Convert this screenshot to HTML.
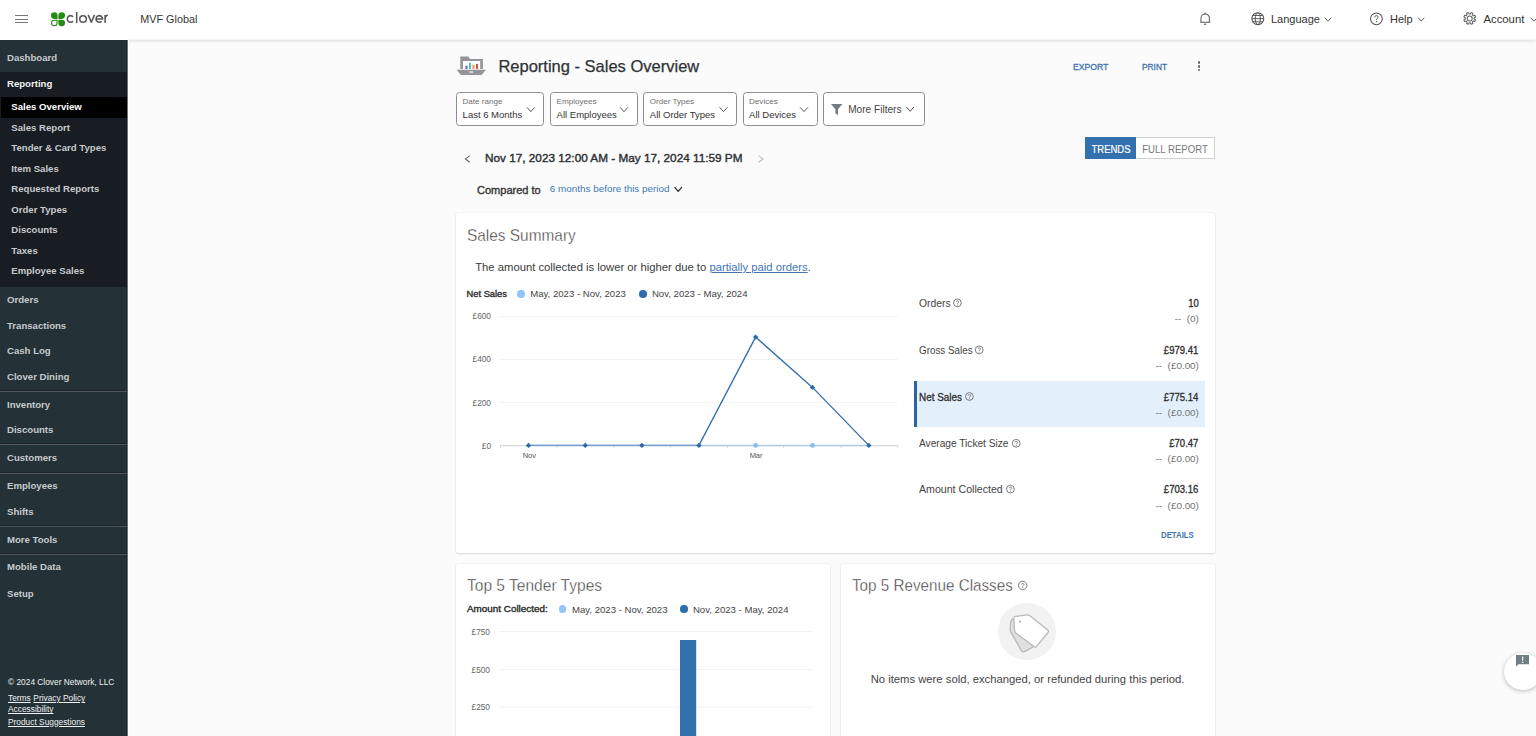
<!DOCTYPE html>
<html><head><meta charset="utf-8">
<style>
*{box-sizing:border-box;margin:0;padding:0}
html,body{width:1536px;height:736px;overflow:hidden;background:#fbfbfb;font-family:"Liberation Sans",sans-serif;color:#333}
.t{position:absolute;white-space:nowrap;line-height:20px}
.b{position:absolute}
svg{position:absolute;overflow:visible}
</style></head><body>

<div class="b" style="left:456px;top:213px;width:759px;height:340px;background:#fff;border-radius:2px;box-shadow:0 1px 2px rgba(0,0,0,.13),0 0 1.3px rgba(0,0,0,.15)"></div>
<div class="b" style="left:456px;top:564px;width:374px;height:200px;background:#fff;border-radius:2px;box-shadow:0 1px 2px rgba(0,0,0,.13),0 0 1.3px rgba(0,0,0,.15)"></div>
<div class="b" style="left:841px;top:564px;width:374px;height:200px;background:#fff;border-radius:2px;box-shadow:0 1px 2px rgba(0,0,0,.13),0 0 1.3px rgba(0,0,0,.15)"></div>
<div class="b" style="left:0px;top:0px;width:1536px;height:40px;background:#fff;box-shadow:0 1px 3px rgba(0,0,0,.13)"></div>
<div class="b" style="left:129px;top:39px;width:1407px;height:1px;background:rgba(0,0,0,.03)"></div>
<div class="b" style="left:15.2px;top:15.2px;width:12.5px;height:1px;background:#777"></div>
<div class="b" style="left:15.2px;top:18.7px;width:12.5px;height:1px;background:#777"></div>
<div class="b" style="left:15.2px;top:22.1px;width:12.5px;height:1px;background:#777"></div>
<svg style="left:0;top:0" width="1" height="1">
<path fill="#238a12" d="M57.6 18.9H54.3A3.3 3.3 0 1 1 57.6 15.6Z"/>
<path fill="#238a12" d="M58.4 18.9V15.6A3.3 3.3 0 1 1 61.7 18.9Z"/>
<path fill="#238a12" d="M58.4 19.7H61.7A3.3 3.3 0 1 1 58.4 23Z"/>
<path fill="none" stroke="#238a12" stroke-width="1.1" d="M57.05 20.25V23A2.75 2.75 0 1 1 54.3 20.25Z"/>
<g fill="none" stroke="#575757" stroke-width="1.55">
<path d="M73.05 16.74A3.3 3.3 0 1 0 73.05 21.16"/>
<path d="M76.7 12V23.1"/>
<circle cx="83.05" cy="18.95" r="3.3"/>
<path d="M88.2 14.9L91.35 22.2L94.5 14.9" stroke-linejoin="round"/>
<path d="M95.95 18.95H102.60A3.3 3.3 0 1 0 101.63 21.28"/>
<path d="M105.1 14.9V23.1M105.1 18.6C105.1 16.2 106.2 15.3 107.8 15.3"/>
</g>
</svg>
<div class="t" style="left:140.30px;top:9.06px;font-size:10.8px;font-weight:normal;color:#333;">MVF Global</div>
<svg style="left:0;top:0" width="1" height="1">
<path d="M1201 22.2V18.2A4.2 4.2 0 0 1 1209.4 18.2V22.2" fill="none" stroke="#666" stroke-width="1.1"/>
<path d="M1200.2 22.3H1210.2" stroke="#666" stroke-width="1.15"/>
<circle cx="1205.2" cy="13.4" r="0.9" fill="#777"/>
<ellipse cx="1205.1" cy="24.3" rx="1.3" ry="0.75" fill="#666"/>
</svg>
<svg style="left:0;top:0" width="1" height="1">
<circle cx="1257.8" cy="18.65" r="5.95" fill="none" stroke="#555" stroke-width="1.1"/>
<ellipse cx="1257.8" cy="18.65" rx="2.55" ry="5.95" fill="none" stroke="#555" stroke-width="1.0"/>
<path d="M1252.6 15.5H1263M1251.9 18.65H1263.7M1252.6 21.8H1263" stroke="#555" stroke-width="0.95"/>
</svg>
<div class="t" style="left:1271.00px;top:8.89px;font-size:11px;font-weight:normal;color:#333;">Language</div>
<svg style="left:0;top:0" width="1" height="1"><path d="M1325 18L1328.0 21.2L1331 18" fill="none" stroke="#666" stroke-width="1.0" stroke-linecap="round" stroke-linejoin="round"/></svg>
<svg style="left:1370px;top:12px" width="14" height="14" viewBox="0 0 14 14">
<circle cx="6.4" cy="6.8" r="5.9" fill="none" stroke="#555" stroke-width="1.05"/>
<path d="M4.7 5.3C4.7 4.2 5.5 3.6 6.4 3.6C7.4 3.6 8.1 4.2 8.1 5.1C8.1 6.2 6.5 6.3 6.5 7.8" fill="none" stroke="#555" stroke-width="1"/>
<circle cx="6.5" cy="9.6" r="0.65" fill="#555"/>
</svg>
<div class="t" style="left:1390.00px;top:9.09px;font-size:11px;font-weight:normal;color:#333;">Help</div>
<svg style="left:0;top:0" width="1" height="1"><path d="M1418.5 18L1421.25 21.2L1424 18" fill="none" stroke="#666" stroke-width="1.0" stroke-linecap="round" stroke-linejoin="round"/></svg>
<svg style="left:0;top:0" width="1" height="1">
<path d="M1470.27 14.04L1471.10 12.57L1472.83 13.28L1472.38 14.91L1473.19 15.72L1474.82 15.27L1475.53 17.00L1474.06 17.83L1474.06 18.97L1475.53 19.80L1474.82 21.53L1473.19 21.08L1472.38 21.89L1472.83 23.52L1471.10 24.23L1470.27 22.76L1469.13 22.76L1468.30 24.23L1466.57 23.52L1467.02 21.89L1466.21 21.08L1464.58 21.53L1463.87 19.80L1465.34 18.97L1465.34 17.83L1463.87 17.00L1464.58 15.27L1466.21 15.72L1467.02 14.91L1466.57 13.28L1468.30 12.57L1469.13 14.04Z" fill="none" stroke="#666" stroke-width="1.05" stroke-linejoin="round"/>
<circle cx="1469.7" cy="18.4" r="2.5" fill="none" stroke="#666" stroke-width="1.05"/>
</svg>
<div class="t" style="left:1483.50px;top:8.98px;font-size:11.3px;font-weight:normal;color:#333;">Account</div>
<svg style="left:0;top:0" width="1" height="1"><path d="M1531 18L1534.0 21.2L1537 18" fill="none" stroke="#666" stroke-width="1.0" stroke-linecap="round" stroke-linejoin="round"/></svg>
<div class="b" style="left:0px;top:40px;width:127px;height:696px;background:#243136"></div>
<div class="b" style="left:126px;top:40px;width:1px;height:696px;background:rgba(0,0,0,.18)"></div>
<div class="b" style="left:127px;top:40px;width:1px;height:696px;background:#6b7276"></div>
<div class="b" style="left:128px;top:40px;width:1px;height:696px;background:#fff"></div>
<div class="b" style="left:0px;top:71.5px;width:127px;height:215.5px;background:#181c23"></div>
<div class="b" style="left:1px;top:97px;width:126px;height:21px;background:#000"></div>
<div class="t" style="left:7.00px;top:47.77px;font-size:9.6px;font-weight:bold;color:#c6cacd;">Dashboard</div>
<div class="t" style="left:7.00px;top:73.67px;font-size:9.6px;font-weight:bold;color:#f2f2f2;">Reporting</div>
<div class="t" style="left:11.30px;top:97.37px;font-size:9.6px;font-weight:bold;color:#fff;">Sales Overview</div>
<div class="t" style="left:11.30px;top:117.57px;font-size:9.6px;font-weight:bold;color:#c6cacd;">Sales Report</div>
<div class="t" style="left:11.30px;top:138.27px;font-size:9.6px;font-weight:bold;color:#c6cacd;">Tender &amp; Card Types</div>
<div class="t" style="left:11.30px;top:158.87px;font-size:9.6px;font-weight:bold;color:#c6cacd;">Item Sales</div>
<div class="t" style="left:11.30px;top:179.37px;font-size:9.6px;font-weight:bold;color:#c6cacd;">Requested Reports</div>
<div class="t" style="left:11.30px;top:199.77px;font-size:9.6px;font-weight:bold;color:#c6cacd;">Order Types</div>
<div class="t" style="left:11.30px;top:220.07px;font-size:9.6px;font-weight:bold;color:#c6cacd;">Discounts</div>
<div class="t" style="left:11.30px;top:240.67px;font-size:9.6px;font-weight:bold;color:#c6cacd;">Taxes</div>
<div class="t" style="left:11.30px;top:261.37px;font-size:9.6px;font-weight:bold;color:#c6cacd;">Employee Sales</div>
<div class="t" style="left:7.00px;top:289.77px;font-size:9.6px;font-weight:bold;color:#c6cacd;">Orders</div>
<div class="t" style="left:7.00px;top:315.77px;font-size:9.6px;font-weight:bold;color:#c6cacd;">Transactions</div>
<div class="t" style="left:7.00px;top:341.27px;font-size:9.6px;font-weight:bold;color:#c6cacd;">Cash Log</div>
<div class="t" style="left:7.00px;top:367.17px;font-size:9.6px;font-weight:bold;color:#c6cacd;">Clover Dining</div>
<div class="t" style="left:7.00px;top:394.57px;font-size:9.6px;font-weight:bold;color:#c6cacd;">Inventory</div>
<div class="t" style="left:7.00px;top:420.37px;font-size:9.6px;font-weight:bold;color:#c6cacd;">Discounts</div>
<div class="t" style="left:7.00px;top:448.17px;font-size:9.6px;font-weight:bold;color:#c6cacd;">Customers</div>
<div class="t" style="left:7.00px;top:476.37px;font-size:9.6px;font-weight:bold;color:#c6cacd;">Employees</div>
<div class="t" style="left:7.00px;top:501.57px;font-size:9.6px;font-weight:bold;color:#c6cacd;">Shifts</div>
<div class="t" style="left:7.00px;top:530.27px;font-size:9.6px;font-weight:bold;color:#c6cacd;">More Tools</div>
<div class="t" style="left:7.00px;top:557.47px;font-size:9.6px;font-weight:bold;color:#c6cacd;">Mobile Data</div>
<div class="t" style="left:7.00px;top:584.07px;font-size:9.6px;font-weight:bold;color:#c6cacd;">Setup</div>
<div class="b" style="left:0px;top:390px;width:127px;height:1px;background:#1d242a"></div>
<div class="b" style="left:0px;top:391px;width:127px;height:1px;background:#4d575d"></div>
<div class="b" style="left:0px;top:443px;width:127px;height:1px;background:#1d242a"></div>
<div class="b" style="left:0px;top:444px;width:127px;height:1px;background:#4d575d"></div>
<div class="b" style="left:0px;top:472px;width:127px;height:1px;background:#1d242a"></div>
<div class="b" style="left:0px;top:473px;width:127px;height:1px;background:#4d575d"></div>
<div class="b" style="left:0px;top:525px;width:127px;height:1px;background:#1d242a"></div>
<div class="b" style="left:0px;top:526px;width:127px;height:1px;background:#4d575d"></div>
<div class="b" style="left:0px;top:553px;width:127px;height:1px;background:#1d242a"></div>
<div class="b" style="left:0px;top:554px;width:127px;height:1px;background:#4d575d"></div>
<div class="t" style="left:8.00px;top:672.41px;font-size:8.35px;font-weight:normal;color:#eef0f1;">&copy; 2024 Clover Network, LLC</div>
<div class="t" style="left:8.00px;top:688.11px;font-size:8.35px;font-weight:normal;color:#eef0f1;"><u>Terms</u><span style="display:inline-block;width:2.6px"></span><u>Privacy Policy</u></div>
<div class="t" style="left:8.00px;top:699.41px;font-size:8.35px;font-weight:normal;color:#eef0f1;"><u>Accessibility</u></div>
<div class="t" style="left:8.00px;top:711.61px;font-size:8.35px;font-weight:normal;color:#eef0f1;"><u>Product Suggestions</u></div>
<svg style="left:456px;top:55px" width="31" height="21" viewBox="0 0 31 21">
<path d="M4.3 1.4H12.6L13.8 4.1H26.9V14H4.3Z" fill="#939598"/>
<rect x="7" y="6" width="17.2" height="8.5" fill="#fff"/>
<rect x="9.4" y="10.7" width="2.1" height="3.3" fill="#6b6bc9"/>
<rect x="13" y="7.8" width="1.9" height="6.2" fill="#3cc4c4"/>
<rect x="16.4" y="9.7" width="2.1" height="4.3" fill="#f59f45"/>
<rect x="20" y="8.9" width="2.1" height="5.1" fill="#c85a5a"/>
<path d="M0.5 14.7H30.1L25.5 19.9H4.9Z" fill="#939598"/>
<rect x="13.3" y="16.3" width="3.8" height="1.5" fill="#e8e8e8"/>
</svg>
<div class="t" style="left:498.40px;top:55.68px;font-size:16.5px;font-weight:normal;color:#2f3336;-webkit-text-stroke:0.25px #2f3336">Reporting - Sales Overview</div>
<div class="t" style="left:1073.00px;top:56.57px;font-size:9.6px;font-weight:normal;color:#3a72b0;-webkit-text-stroke:0.3px #3a72b0;transform:scaleX(0.9);transform-origin:left center">EXPORT</div>
<div class="t" style="left:1141.80px;top:56.57px;font-size:9.6px;font-weight:normal;color:#3a72b0;-webkit-text-stroke:0.3px #3a72b0;transform:scaleX(0.87);transform-origin:left center">PRINT</div>
<div class="b" style="left:1198.2px;top:61.4px;width:2.3px;height:2.3px;border-radius:50%;background:#666"></div>
<div class="b" style="left:1198.2px;top:65.3px;width:2.3px;height:2.3px;border-radius:50%;background:#666"></div>
<div class="b" style="left:1198.2px;top:69.2px;width:2.3px;height:2.3px;border-radius:50%;background:#666"></div>
<div class="b" style="left:456px;top:92px;width:88px;height:34px;background:#fff;border:1px solid #8e8e8e;border-radius:3.5px"></div>
<div class="t" style="left:462.50px;top:91.79px;font-size:8.1px;font-weight:normal;color:#6f6f6f;">Date range</div>
<div class="t" style="left:462.60px;top:104.91px;font-size:9.5px;font-weight:normal;color:#333;">Last 6 Months</div>
<svg style="left:0;top:0" width="1" height="1"><path d="M527.0999999999999 107.6L530.8 111.6L534.5 107.6" fill="none" stroke="#555" stroke-width="1.0" stroke-linecap="round" stroke-linejoin="round"/></svg>
<div class="b" style="left:550px;top:92px;width:87.5px;height:34px;background:#fff;border:1px solid #8e8e8e;border-radius:3.5px"></div>
<div class="t" style="left:556.50px;top:91.79px;font-size:8.1px;font-weight:normal;color:#6f6f6f;">Employees</div>
<div class="t" style="left:556.60px;top:104.91px;font-size:9.5px;font-weight:normal;color:#333;">All Employees</div>
<svg style="left:0;top:0" width="1" height="1"><path d="M620.3 107.6L624.0 111.6L627.7 107.6" fill="none" stroke="#555" stroke-width="1.0" stroke-linecap="round" stroke-linejoin="round"/></svg>
<div class="b" style="left:643.2px;top:92px;width:94.09999999999991px;height:34px;background:#fff;border:1px solid #8e8e8e;border-radius:3.5px"></div>
<div class="t" style="left:649.70px;top:91.79px;font-size:8.1px;font-weight:normal;color:#6f6f6f;">Order Types</div>
<div class="t" style="left:649.80px;top:104.91px;font-size:9.5px;font-weight:normal;color:#333;">All Order Types</div>
<svg style="left:0;top:0" width="1" height="1"><path d="M719.8 107.6L723.5 111.6L727.2 107.6" fill="none" stroke="#555" stroke-width="1.0" stroke-linecap="round" stroke-linejoin="round"/></svg>
<div class="b" style="left:742.5px;top:92px;width:75.10000000000002px;height:34px;background:#fff;border:1px solid #8e8e8e;border-radius:3.5px"></div>
<div class="t" style="left:749.00px;top:91.79px;font-size:8.1px;font-weight:normal;color:#6f6f6f;">Devices</div>
<div class="t" style="left:749.10px;top:104.91px;font-size:9.5px;font-weight:normal;color:#333;">All Devices</div>
<svg style="left:0;top:0" width="1" height="1"><path d="M800.3 107.6L804.0 111.6L807.7 107.6" fill="none" stroke="#555" stroke-width="1.0" stroke-linecap="round" stroke-linejoin="round"/></svg>
<div class="b" style="left:823px;top:92px;width:101.5px;height:34px;background:#fff;border:1px solid #8e8e8e;border-radius:3.5px"></div>
<svg style="left:830.8px;top:104px" width="12" height="11" viewBox="0 0 12 11"><path d="M0 0H11.4L7 5.2V11L4.4 9.3V5.2Z" fill="#737b80"/></svg>
<div class="t" style="left:848.20px;top:100.10px;font-size:10.1px;font-weight:normal;color:#444;">More Filters</div>
<svg style="left:0;top:0" width="1" height="1"><path d="M906.5 107.2L910.15 111.3L913.8 107.2" fill="none" stroke="#555" stroke-width="1.0" stroke-linecap="round" stroke-linejoin="round"/></svg>
<svg style="left:0;top:0" width="1" height="1"><path d="M469.8 155.6L465.4 158.9L469.8 162.2" fill="none" stroke="#666" stroke-width="1.1"/></svg>
<div class="t" style="left:485.20px;top:148.38px;font-size:11.6px;font-weight:normal;color:#2c2f33;-webkit-text-stroke:0.4px #2c2f33;transform:scaleX(1.015);transform-origin:left center">Nov 17, 2023 12:00 AM - May 17, 2024 11:59 PM</div>
<svg style="left:0;top:0" width="1" height="1"><path d="M758.6 155.6L763 158.9L758.6 162.2" fill="none" stroke="#bbb" stroke-width="1.1"/></svg>
<div class="t" style="left:477.40px;top:179.62px;font-size:10.6px;font-weight:normal;color:#333;-webkit-text-stroke:0.35px #333;transform:scaleX(1.04);transform-origin:left center">Compared to</div>
<div class="t" style="left:549.80px;top:179.17px;font-size:9.9px;font-weight:normal;color:#3f78b5;">6 months before this period</div>
<svg style="left:0;top:0" width="1" height="1"><path d="M674.8 187.4L678.2 191.4L681.6 187.4" fill="none" stroke="#333" stroke-width="1.3" stroke-linecap="round" stroke-linejoin="round"/></svg>
<div class="b" style="left:1085px;top:137px;width:51px;height:22px;background:#3271ad"></div>
<div class="b" style="left:1136px;top:137px;width:79px;height:22px;background:#fff;border:1px solid #cfcfcf;border-left:none"></div>
<div class="t" style="left:810.60px;width:600px;text-align:center;top:139.26px;font-size:10.8px;font-weight:normal;color:#fff;-webkit-text-stroke:0.2px #fff;transform:scaleX(0.88);transform-origin:center center">TRENDS</div>
<div class="t" style="left:875.40px;width:600px;text-align:center;top:139.26px;font-size:10.8px;font-weight:normal;color:#777;;transform:scaleX(0.89);transform-origin:center center">FULL REPORT</div>
<div class="t" style="left:466.60px;top:224.91px;font-size:16.4px;font-weight:normal;color:#333;-webkit-text-stroke:0.4px #fff;transform:scaleX(0.94);transform-origin:left center">Sales Summary</div>
<div class="t" style="left:475.20px;top:257.39px;font-size:11.28px;font-weight:normal;color:#3a3a3a;">The amount collected is lower or higher due to <span style="color:#4277b3;text-decoration:underline">partially paid orders</span>.</div>
<div class="t" style="left:466.60px;top:284.18px;font-size:9.3px;font-weight:normal;color:#2a2a2a;-webkit-text-stroke:0.35px #2a2a2a;transform:scaleX(1.0);transform-origin:left center">Net Sales</div>
<div class="b" style="left:517.3px;top:290px;width:7.6px;height:7.6px;border-radius:50%;background:#90c6f9"></div>
<div class="t" style="left:530.20px;top:284.07px;font-size:9.6px;font-weight:normal;color:#444;">May, 2023 - Nov, 2023</div>
<div class="b" style="left:639.2px;top:290px;width:7.6px;height:7.6px;border-radius:50%;background:#2f6cab"></div>
<div class="t" style="left:651.90px;top:284.07px;font-size:9.6px;font-weight:normal;color:#444;">Nov, 2023 - May, 2024</div>
<div class="t" style="right:1045.00px;top:306.42px;font-size:8.3px;font-weight:normal;color:#666;">£600</div>
<div class="t" style="right:1045.00px;top:349.42px;font-size:8.3px;font-weight:normal;color:#666;">£400</div>
<div class="t" style="right:1045.00px;top:392.52px;font-size:8.3px;font-weight:normal;color:#666;">£200</div>
<div class="t" style="right:1045.00px;top:435.62px;font-size:8.3px;font-weight:normal;color:#666;">£0</div>
<svg style="left:0;top:0" width="1" height="1"><path d="M500 316.5H898" stroke="#e9e9e9" stroke-width="1" stroke-dasharray="1 1"/><path d="M500 359.5H898" stroke="#e9e9e9" stroke-width="1" stroke-dasharray="1 1"/><path d="M500 402.5H898" stroke="#e9e9e9" stroke-width="1" stroke-dasharray="1 1"/><path d="M500 445.7H898" stroke="#d8d8d8" stroke-width="1.3"/><path d="M500.5 445.5V448.3" stroke="#d8d8d8" stroke-width="0.9"/><path d="M557 445.5V448.3" stroke="#d8d8d8" stroke-width="0.9"/><path d="M614 445.5V448.3" stroke="#d8d8d8" stroke-width="0.9"/><path d="M670.5 445.5V448.3" stroke="#d8d8d8" stroke-width="0.9"/><path d="M727.4 445.5V448.3" stroke="#d8d8d8" stroke-width="0.9"/><path d="M783.6 445.5V448.3" stroke="#d8d8d8" stroke-width="0.9"/><path d="M841.1 445.5V448.3" stroke="#d8d8d8" stroke-width="0.9"/><path d="M897.8 445.5V448.3" stroke="#d8d8d8" stroke-width="0.9"/><polyline points="528.5,445.4 585.2,445.4 641.9,445.4 698.9,445.4 755.6,337.1 812.5,387.4 868.8,445.4" fill="none" stroke="#3570ad" stroke-width="1.35" stroke-linejoin="round"/><path d="M528.5 445.4H868.8" stroke="#90c3ee" stroke-width="1.5" opacity="0.6"/><circle cx="755.6" cy="445.4" r="2.4" fill="#85bdee"/><circle cx="812.5" cy="445.4" r="2.4" fill="#85bdee"/><path d="M528.5 442.7L531.2 445.4L528.5 448.09999999999997L525.8 445.4Z" fill="#2f6aa8"/><path d="M585.2 442.7L587.9000000000001 445.4L585.2 448.09999999999997L582.5 445.4Z" fill="#2f6aa8"/><path d="M641.9 442.7L644.6 445.4L641.9 448.09999999999997L639.1999999999999 445.4Z" fill="#2f6aa8"/><path d="M698.9 442.7L701.6 445.4L698.9 448.09999999999997L696.1999999999999 445.4Z" fill="#2f6aa8"/><path d="M755.6 334.40000000000003L758.3000000000001 337.1L755.6 339.8L752.9 337.1Z" fill="#2f6aa8"/><path d="M812.5 384.7L815.2 387.4L812.5 390.09999999999997L809.8 387.4Z" fill="#2f6aa8"/><path d="M868.8 442.7L871.5 445.4L868.8 448.09999999999997L866.0999999999999 445.4Z" fill="#2f6aa8"/></svg>
<div class="t" style="left:229.30px;width:600px;text-align:center;top:445.70px;font-size:7.5px;font-weight:normal;color:#555;">Nov</div>
<div class="t" style="left:456.10px;width:600px;text-align:center;top:445.70px;font-size:7.5px;font-weight:normal;color:#555;">Mar</div>
<div class="b" style="left:914px;top:381px;width:290.5px;height:46px;background:#e3f0fc"></div>
<div class="b" style="left:914px;top:381px;width:2.5px;height:46px;background:#2b65a0"></div>
<div class="t" style="left:918.90px;top:293.02px;font-size:10.6px;font-weight:normal;color:#444;;transform:scaleX(0.977);transform-origin:left center">Orders</div>
<svg style="left:0;top:0" width="1" height="1"><circle cx="957.4" cy="302.9" r="3.9" fill="none" stroke="#666" stroke-width="0.85"/><path d="M956.1 301.9C956.1 300.7 958.8 300.7 958.8 302.0C958.8 302.9 957.4 302.79999999999995 957.4 304.0" fill="none" stroke="#666" stroke-width="0.8"/><circle cx="957.4" cy="305.09999999999997" r="0.5" fill="#666"/></svg>
<div class="t" style="right:337.30px;top:293.02px;font-size:10.6px;font-weight:normal;color:#2e2e2e;-webkit-text-stroke:0.32px #2e2e2e;transform:scaleX(0.9);transform-origin:right center">10</div>
<div class="t" style="right:337.10px;top:309.27px;font-size:9.9px;font-weight:normal;color:#737373;">--&nbsp; (0)</div>
<div class="t" style="left:918.90px;top:340.02px;font-size:10.6px;font-weight:normal;color:#444;;transform:scaleX(0.928);transform-origin:left center">Gross Sales</div>
<svg style="left:0;top:0" width="1" height="1"><circle cx="979.1999999999999" cy="349.9" r="3.9" fill="none" stroke="#666" stroke-width="0.85"/><path d="M977.9 348.9C977.9 347.7 980.5999999999999 347.7 980.5999999999999 349.0C980.5999999999999 349.9 979.1999999999999 349.79999999999995 979.1999999999999 351.0" fill="none" stroke="#666" stroke-width="0.8"/><circle cx="979.1999999999999" cy="352.09999999999997" r="0.5" fill="#666"/></svg>
<div class="t" style="right:337.30px;top:340.02px;font-size:10.6px;font-weight:normal;color:#2e2e2e;-webkit-text-stroke:0.32px #2e2e2e;transform:scaleX(0.9);transform-origin:right center">£979.41</div>
<div class="t" style="right:337.10px;top:356.07px;font-size:9.9px;font-weight:normal;color:#737373;">--&nbsp; (£0.00)</div>
<div class="t" style="left:918.90px;top:386.62px;font-size:10.6px;font-weight:normal;color:#2e2e2e;-webkit-text-stroke:0.3px #2e2e2e;transform:scaleX(0.937);transform-origin:left center">Net Sales</div>
<svg style="left:0;top:0" width="1" height="1"><circle cx="969.4" cy="396.5" r="3.9" fill="none" stroke="#666" stroke-width="0.85"/><path d="M968.1 395.5C968.1 394.3 970.8 394.3 970.8 395.6C970.8 396.5 969.4 396.4 969.4 397.6" fill="none" stroke="#666" stroke-width="0.8"/><circle cx="969.4" cy="398.7" r="0.5" fill="#666"/></svg>
<div class="t" style="right:337.30px;top:386.62px;font-size:10.6px;font-weight:normal;color:#2e2e2e;-webkit-text-stroke:0.32px #2e2e2e;transform:scaleX(0.9);transform-origin:right center">£775.14</div>
<div class="t" style="right:337.10px;top:402.57px;font-size:9.9px;font-weight:normal;color:#737373;">--&nbsp; (£0.00)</div>
<div class="t" style="left:918.90px;top:433.42px;font-size:10.6px;font-weight:normal;color:#444;;transform:scaleX(0.958);transform-origin:left center">Average Ticket Size</div>
<svg style="left:0;top:0" width="1" height="1"><circle cx="1016.1999999999999" cy="443.3" r="3.9" fill="none" stroke="#666" stroke-width="0.85"/><path d="M1014.9 442.3C1014.9 441.1 1017.5999999999999 441.1 1017.5999999999999 442.40000000000003C1017.5999999999999 443.3 1016.1999999999999 443.2 1016.1999999999999 444.40000000000003" fill="none" stroke="#666" stroke-width="0.8"/><circle cx="1016.1999999999999" cy="445.5" r="0.5" fill="#666"/></svg>
<div class="t" style="right:337.30px;top:433.42px;font-size:10.6px;font-weight:normal;color:#2e2e2e;-webkit-text-stroke:0.32px #2e2e2e;transform:scaleX(0.9);transform-origin:right center">£70.47</div>
<div class="t" style="right:337.10px;top:449.07px;font-size:9.9px;font-weight:normal;color:#737373;">--&nbsp; (£0.00)</div>
<div class="t" style="left:918.90px;top:479.22px;font-size:10.6px;font-weight:normal;color:#444;;transform:scaleX(1.001);transform-origin:left center">Amount Collected</div>
<svg style="left:0;top:0" width="1" height="1"><circle cx="1010.4" cy="489.09999999999997" r="3.9" fill="none" stroke="#666" stroke-width="0.85"/><path d="M1009.1 488.09999999999997C1009.1 486.9 1011.8 486.9 1011.8 488.2C1011.8 489.09999999999997 1010.4 488.99999999999994 1010.4 490.2" fill="none" stroke="#666" stroke-width="0.8"/><circle cx="1010.4" cy="491.29999999999995" r="0.5" fill="#666"/></svg>
<div class="t" style="right:337.30px;top:479.22px;font-size:10.6px;font-weight:normal;color:#2e2e2e;-webkit-text-stroke:0.32px #2e2e2e;transform:scaleX(0.9);transform-origin:right center">£703.16</div>
<div class="t" style="right:337.10px;top:495.77px;font-size:9.9px;font-weight:normal;color:#737373;">--&nbsp; (£0.00)</div>
<div class="t" style="left:1160.80px;top:524.81px;font-size:8.9px;font-weight:bold;color:#3d74b2;;transform:scaleX(0.88);transform-origin:left center">DETAILS</div>
<div class="t" style="left:467.00px;top:574.58px;font-size:16.2px;font-weight:normal;color:#333;-webkit-text-stroke:0.4px #fff;transform:scaleX(0.96);transform-origin:left center">Top 5 Tender Types</div>
<div class="t" style="left:466.80px;top:599.31px;font-size:9.2px;font-weight:normal;color:#2a2a2a;-webkit-text-stroke:0.35px #2a2a2a;transform:scaleX(1.075);transform-origin:left center">Amount Collected:</div>
<div class="b" style="left:558.6px;top:605.3px;width:7.6px;height:7.6px;border-radius:50%;background:#90c6f9"></div>
<div class="t" style="left:571.90px;top:599.67px;font-size:9.6px;font-weight:normal;color:#444;">May, 2023 - Nov, 2023</div>
<div class="b" style="left:680.2px;top:605.3px;width:7.6px;height:7.6px;border-radius:50%;background:#2f6cab"></div>
<div class="t" style="left:692.90px;top:599.67px;font-size:9.6px;font-weight:normal;color:#444;">Nov, 2023 - May, 2024</div>
<div class="t" style="right:1046.00px;top:621.92px;font-size:8.3px;font-weight:normal;color:#666;">£750</div>
<div class="t" style="right:1046.00px;top:659.82px;font-size:8.3px;font-weight:normal;color:#666;">£500</div>
<div class="t" style="right:1046.00px;top:696.92px;font-size:8.3px;font-weight:normal;color:#666;">£250</div>
<svg style="left:0;top:0" width="1" height="1"><path d="M499 631.5H813" stroke="#e9e9e9" stroke-width="1" stroke-dasharray="1 1"/><path d="M499 669.5H813" stroke="#e9e9e9" stroke-width="1" stroke-dasharray="1 1"/><path d="M499 707H813" stroke="#e9e9e9" stroke-width="1" stroke-dasharray="1 1"/><rect x="680" y="640" width="16.2" height="100" fill="#3270ab"/></svg>
<div class="t" style="left:851.60px;top:574.95px;font-size:16.3px;font-weight:normal;color:#333;-webkit-text-stroke:0.4px #fff;transform:scaleX(0.935);transform-origin:left center">Top 5 Revenue Classes</div>
<svg style="left:0;top:0" width="1" height="1"><circle cx="1022.7" cy="585.4" r="4.2" fill="none" stroke="#666" stroke-width="0.85"/><path d="M1021.4000000000001 584.4C1021.4000000000001 583.1999999999999 1024.1000000000001 583.1999999999999 1024.1000000000001 584.5C1024.1000000000001 585.4 1022.7 585.3 1022.7 586.5" fill="none" stroke="#666" stroke-width="0.8"/><circle cx="1022.7" cy="587.6" r="0.5" fill="#666"/></svg>
<div class="b" style="left:998.4px;top:602.8px;width:57.6px;height:57.6px;border-radius:50%;background:#f2f2f2"></div>
<svg style="left:0;top:0" width="1" height="1">
<path d="M1012.6 618.6Q1011.2 620 1010.6 622.4L1010.3 629.6Q1010.3 631.2 1011 632.4L1021.3 650.6Q1022.7 652.6 1024.6 651.6L1033 647Z" fill="#e0e0e0" stroke="#b8b8b8" stroke-width="1.25" stroke-linejoin="round"/>
<path d="M1015.4 616.4L1027.2 614.9Q1028.7 614.8 1029.9 615.7L1047.7 629.9Q1049 631 1048 632.5L1036.6 646.4Q1035.5 647.6 1034.1 646.6L1016.4 633.4Q1015 632.3 1014.6 630.7L1013.8 618.2Q1013.8 616.6 1015.4 616.4Z" fill="#fff" stroke="#b8b8b8" stroke-width="1.25" stroke-linejoin="round"/>
<circle cx="1020" cy="621.6" r="1.2" fill="#b5b5b5"/>
</svg>
<div class="t" style="left:727.50px;width:600px;text-align:center;top:668.59px;font-size:11.27px;font-weight:normal;color:#444;">No items were sold, exchanged, or refunded during this period.</div>
<div class="b" style="left:1504.2px;top:652.8px;width:37.5px;height:37.5px;border-radius:50%;background:#fff;box-shadow:0 1px 4px rgba(0,0,0,.28)"></div>
<svg style="left:1516px;top:654.8px" width="13" height="12" viewBox="0 0 13 12">
<path d="M0 0H13V9.3H2.3L0 11.8Z" fill="#6f8187"/>
<rect x="6" y="1.6" width="1.2" height="4.2" fill="#fff"/>
<rect x="6" y="6.8" width="1.2" height="1.3" fill="#fff"/>
</svg>
</body></html>
